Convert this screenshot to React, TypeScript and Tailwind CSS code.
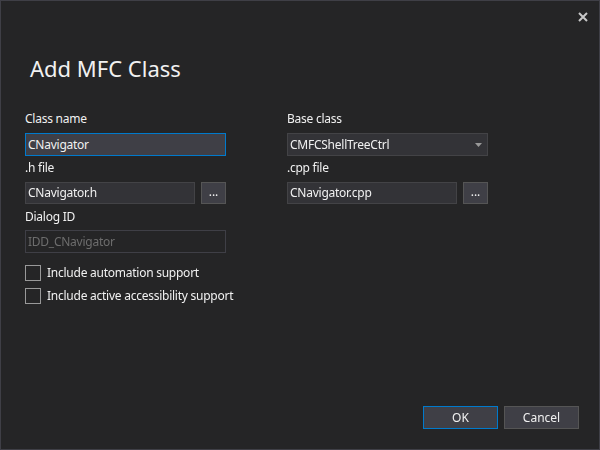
import { useState } from 'react';

const font = { fontFamily: '"Noto Sans", "Open Sans", sans-serif' };

function Label({ text }: { text: string }) {
  return <div className="h-[16px] text-[12px] leading-[16px] tracking-[-0.25px] text-[#f1f1f1]">{text}</div>;
}

function BrowseButton() {
  return (
    <button className="ml-[6px] w-[25px] h-[22px] bg-[#3f3f46] border border-[#555555] text-[#f1f1f1] text-[12px] leading-none flex items-center justify-center pb-[2px]">...</button>
  );
}

function Check({ label, checked, onChange, className }: { label: string; checked: boolean; onChange: () => void; className?: string }) {
  return (
    <label className={`flex items-center h-[16px] cursor-default ${className ?? ''}`} onClick={onChange}>
      <span className="w-[16px] h-[16px] shrink-0 border border-[#999999] bg-[#252526] flex items-center justify-center">
        {checked && (
          <svg width="10" height="10" viewBox="0 0 10 10"><path d="M1 5l3 3 5-6" stroke="#f1f1f1" strokeWidth="1.5" fill="none" /></svg>
        )}
      </span>
      <span className="ml-[6px] whitespace-nowrap text-[12px] leading-[16px] tracking-[-0.25px] text-[#f1f1f1]">{label}</span>
    </label>
  );
}

export default function App() {
  const [className, setClassName] = useState('CNavigator');
  const [automation, setAutomation] = useState(false);
  const [accessibility, setAccessibility] = useState(false);

  return (
    <div style={font} className="w-[600px] h-[450px] bg-[#252526] border border-[#3f3f46] flex flex-col select-none">
      <div className="flex justify-end h-[34px] pt-[11px] pr-[11px]">
        <svg width="10" height="10" viewBox="0 0 10 10">
          <path d="M1 1l8 8M9 1l-8 8" stroke="#c8c8c8" strokeWidth="2" />
        </svg>
      </div>

      <h1 className="mt-[22px] ml-[29px] h-[22px] text-[22px] leading-none text-[#f1f1f1] font-normal">Add MFC Class</h1>

      <div className="mt-[32px] ml-[24px] grid grid-cols-[201px_201px] gap-x-[61px]">
        <div className="flex flex-col">
          <Label text="Class name" />
          <div className="mt-[6px] h-[23px] bg-[#3f3f46] border border-[#007acc] flex items-center pl-[2px]">
            <input value={className} onChange={e => setClassName(e.target.value)} className="w-full bg-transparent outline-none text-[12px] tracking-[-0.25px] text-[#f1f1f1] caret-[#f1f1f1]" autoFocus />
          </div>
          <div className="mt-[4px]"><Label text=".h file" /></div>
          <div className="mt-[6px] flex">
            <div className="w-[170px] h-[22px] bg-[#333337] border border-[#434346] flex items-center pl-[2px] text-[12px] tracking-[-0.25px] text-[#f1f1f1]">CNavigator.h</div>
            <BrowseButton />
          </div>
          <div className="mt-[5px]"><Label text="Dialog ID" /></div>
          <div className="mt-[5px] h-[23px] border border-[#3f3f46] flex items-center pl-[2px] text-[12px] tracking-[-0.25px] text-[#6d6d6d]">IDD_CNavigator</div>
          <Check className="mt-[12px]" label="Include automation support" checked={automation} onChange={() => setAutomation(!automation)} />
          <Check className="mt-[7px]" label="Include active accessibility support" checked={accessibility} onChange={() => setAccessibility(!accessibility)} />
        </div>

        <div className="flex flex-col">
          <Label text="Base class" />
          <div className="mt-[6px] h-[23px] bg-[#333337] border border-[#434346] flex items-center justify-between pl-[2px] pr-[5px] text-[12px] tracking-[-0.25px] text-[#f1f1f1]">
            <span>CMFCShellTreeCtrl</span>
            <svg width="7" height="4" viewBox="0 0 7 4"><path d="M0 0h7L3.5 4z" fill="#999999" /></svg>
          </div>
          <div className="mt-[4px]"><Label text=".cpp file" /></div>
          <div className="mt-[6px] flex">
            <div className="w-[170px] h-[22px] bg-[#333337] border border-[#434346] flex items-center pl-[2px] text-[12px] tracking-[-0.25px] text-[#f1f1f1]">CNavigator.cpp</div>
            <BrowseButton />
          </div>
        </div>
      </div>

      <div className="flex-1" />

      <div className="flex justify-end gap-[6px] pr-[20px] pb-[20px]">
        <button className="w-[75px] h-[23px] bg-[#3f3f46] border border-[#007acc] text-[12px] text-[#f1f1f1]">OK</button>
        <button className="w-[75px] h-[23px] bg-[#3f3f46] border border-[#555555] text-[12px] text-[#f1f1f1]">Cancel</button>
      </div>
    </div>
  );
}
